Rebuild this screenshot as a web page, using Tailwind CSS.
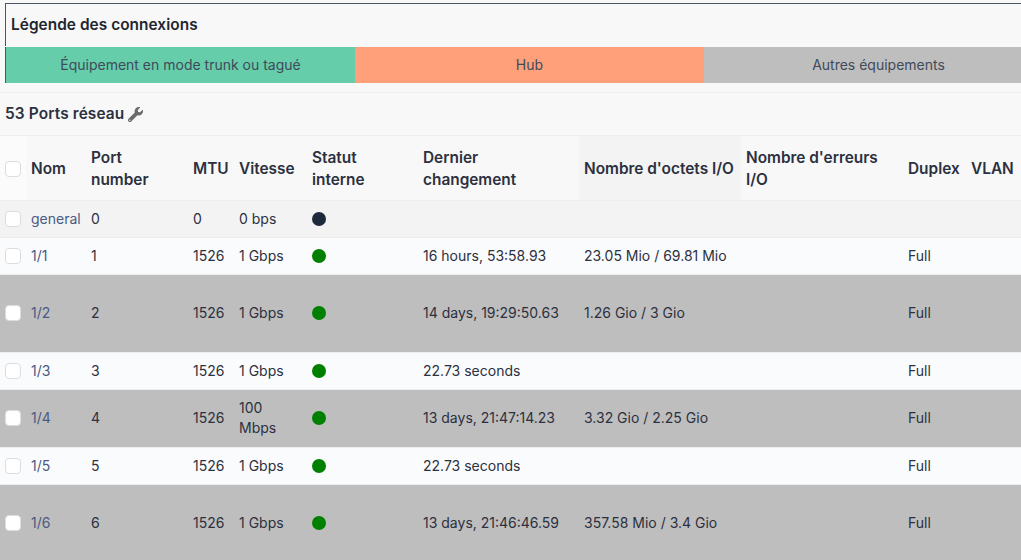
<!DOCTYPE html>
<html lang="fr">
<head>
    <meta charset="UTF-8">
    <title>Ports réseau</title>
    <script src="https://cdn.jsdelivr.net/npm/@tailwindcss/browser@4"></script>
</head>
<body class="bg-[#f8f8f8] font-['Inter',sans-serif] text-[14px] leading-[20px] text-[#2c3040] overflow-hidden h-[560px]">

<div class="pt-[3px] pl-[5px]">
    <div class="h-[43px] border-l border-t border-[#4a5568] flex items-center pl-[5px] font-semibold text-[15.4px] tracking-[0.05px] text-[#23262f]">Légende des connexions</div>
    <div class="flex h-[36px] mt-[1px] w-[1048px] border-l border-[#4a5568] text-[#3f4a5a]">
        <div class="w-[349px] bg-[#66cdaa] flex items-center justify-center">Équipement en mode trunk ou tagué</div>
        <div class="w-[349px] bg-[#ffa07a] flex items-center justify-center">Hub</div>
        <div class="flex-1 bg-[#bebebe] flex items-center justify-center">Autres équipements</div>
    </div>
</div>

<div class="mt-[9px] h-[44px] border-y border-[#eeeeee] pl-[5px] flex items-center gap-[4px] font-semibold text-[15.4px] tracking-[0.13px] text-[#2c3040]">
    53 Ports réseau
    <svg class="w-[15px] h-[15px]" viewBox="0 0 512 512" fill="#6b6b6b"><path d="M507.7 109.1c-2.2-9-13.5-12.1-20.1-5.5l-74.4 74.4-67.9-11.3-11.3-67.9 74.4-74.4c6.6-6.6 3.4-17.9-5.7-20.2-47.4-11.7-99.600 .9-136.600 37.900-39.600 39.600-51 97.300-34.800 147.400L18.700 402.800c-25 25-25 65.500 0 90.500s65.500 25 90.500 0l213.200-213.200c50.100 16.700 107.800 4.700 147.900-35.400 37.100-37.100 49.700-89.300 37.400-136.600zM64 472c-13.300 0-24-10.700-24-24s10.700-24 24-24 24 10.700 24 24-10.700 24-24 24z"/></svg>
</div>

<table class="table-fixed border-collapse w-[1021px]">
    <colgroup>
        <col class="w-[26px]"><col class="w-[60px]"><col class="w-[102px]"><col class="w-[46px]"><col class="w-[73px]"><col class="w-[111px]"><col class="w-[161px]"><col class="w-[162px]"><col class="w-[162px]"><col class="w-[63px]"><col class="w-[55px]">
    </colgroup>
    <thead>
        <tr class="h-[64px] border-b border-[#eeeeee] text-left text-[15.4px] leading-[22px] text-[#2c3040] [&>th]:px-[5px] [&>th]:font-semibold [&>th]:pt-[10px] [&>th]:pb-[8px]">
            <th class="bg-[#fbfbfb]"><span class="block w-[16px] h-[16px] rounded-[4px] border border-[#dddddd] bg-white"></span></th>
            <th>Nom</th>
            <th>Port number</th>
            <th>MTU</th>
            <th>Vitesse</th>
            <th>Statut interne</th>
            <th>Dernier changement</th>
            <th class="bg-[#f3f3f3] whitespace-nowrap">Nombre d'octets I/O</th>
            <th>Nombre d'erreurs I/O</th>
            <th>Duplex</th>
            <th>VLAN</th>
        </tr>
    </thead>
    <tbody class="[&_td]:px-[5px]">
        <tr class="h-[37px] bg-[#f3f3f3] border-b border-[#eeeeee]">
            <td><span class="block w-[16px] h-[16px] rounded-[4px] border border-[#dddddd] bg-white"></span></td>
            <td class="text-[#4a5a82]">general</td><td>0</td><td>0</td><td>0 bps</td>
            <td><span class="block w-[14px] h-[14px] rounded-full bg-[#1e293b]"></span></td>
            <td></td><td></td><td></td><td></td><td></td>
        </tr>
        <tr class="h-[37px] bg-[#fafbfd] border-b border-[#eeeeee]">
            <td><span class="block w-[16px] h-[16px] rounded-[4px] border border-[#dddddd] bg-white"></span></td>
            <td class="text-[#4a5a82]">1/1</td><td>1</td><td>1526</td><td>1 Gbps</td>
            <td><span class="block w-[14px] h-[14px] rounded-full bg-[#008000]"></span></td>
            <td>16 hours, 53:58.93</td><td>23.05 Mio / 69.81 Mio</td><td></td><td>Full</td><td></td>
        </tr>
        <tr class="h-[78px] bg-[#bebebe] border-b border-[#eeeeee]">
            <td><span class="block w-[16px] h-[16px] rounded-[4px] border border-[#dddddd] bg-white"></span></td>
            <td class="text-[#4a5a82]">1/2</td><td>2</td><td>1526</td><td>1 Gbps</td>
            <td><span class="block w-[14px] h-[14px] rounded-full bg-[#008000]"></span></td>
            <td>14 days, 19:29:50.63</td><td>1.26 Gio / 3 Gio</td><td></td><td>Full</td><td></td>
        </tr>
        <tr class="h-[37px] bg-[#fafbfd] border-b border-[#eeeeee]">
            <td><span class="block w-[16px] h-[16px] rounded-[4px] border border-[#dddddd] bg-white"></span></td>
            <td class="text-[#4a5a82]">1/3</td><td>3</td><td>1526</td><td>1 Gbps</td>
            <td><span class="block w-[14px] h-[14px] rounded-full bg-[#008000]"></span></td>
            <td>22.73 seconds</td><td></td><td></td><td>Full</td><td></td>
        </tr>
        <tr class="h-[58px] bg-[#bebebe] border-b border-[#eeeeee]">
            <td><span class="block w-[16px] h-[16px] rounded-[4px] border border-[#dddddd] bg-white"></span></td>
            <td class="text-[#4a5a82]">1/4</td><td>4</td><td>1526</td><td>100 Mbps</td>
            <td><span class="block w-[14px] h-[14px] rounded-full bg-[#008000]"></span></td>
            <td>13 days, 21:47:14.23</td><td>3.32 Gio / 2.25 Gio</td><td></td><td>Full</td><td></td>
        </tr>
        <tr class="h-[37px] bg-[#fafbfd] border-b border-[#eeeeee]">
            <td><span class="block w-[16px] h-[16px] rounded-[4px] border border-[#dddddd] bg-white"></span></td>
            <td class="text-[#4a5a82]">1/5</td><td>5</td><td>1526</td><td>1 Gbps</td>
            <td><span class="block w-[14px] h-[14px] rounded-full bg-[#008000]"></span></td>
            <td>22.73 seconds</td><td></td><td></td><td>Full</td><td></td>
        </tr>
        <tr class="h-[77px] bg-[#bebebe]">
            <td><span class="block w-[16px] h-[16px] rounded-[4px] border border-[#dddddd] bg-white"></span></td>
            <td class="text-[#4a5a82]">1/6</td><td>6</td><td>1526</td><td>1 Gbps</td>
            <td><span class="block w-[14px] h-[14px] rounded-full bg-[#008000]"></span></td>
            <td>13 days, 21:46:46.59</td><td>357.58 Mio / 3.4 Gio</td><td></td><td>Full</td><td></td>
        </tr>
    </tbody>
</table>

</body>
</html>
